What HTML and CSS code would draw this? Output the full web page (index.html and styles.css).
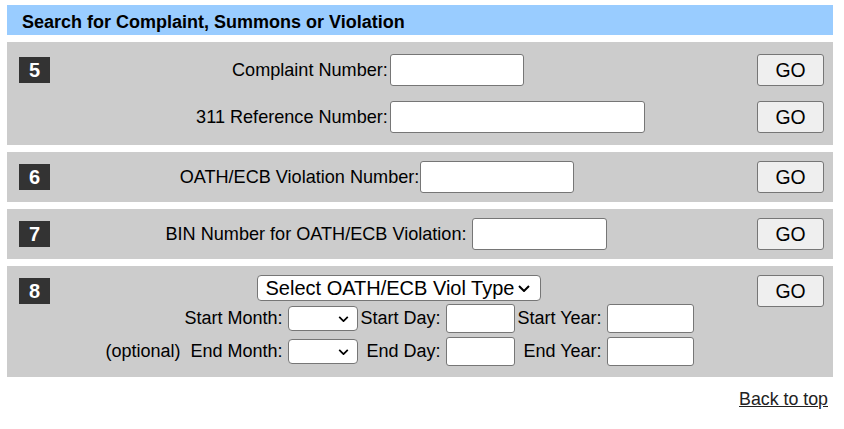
FILE: index.html
```html
<!DOCTYPE html>
<html lang="en">
<head>
<meta charset="utf-8">
<title>Search for Complaint, Summons or Violation</title>
<link rel="stylesheet" href="styles.css">
</head>
<body>
<div class="page">
  <div class="title">Search for Complaint, Summons or Violation</div>

  <section class="panel panel-tall">
    <div class="badge">5</div>
    <div class="middle shift-5">
      <div class="pairs">
        <label class="lbl">Complaint Number:</label><input class="txt w134" type="text">
        <label class="lbl">311 Reference Number:</label><input class="txt w255" type="text">
      </div>
    </div>
    <div class="go-col go-col-5">
      <button class="go">GO</button>
      <button class="go">GO</button>
    </div>
  </section>

  <section class="panel">
    <div class="badge">6</div>
    <div class="middle shift-6">
      <div class="row tight">
        <label class="lbl">OATH/ECB Violation Number:</label><input class="txt w154" type="text">
      </div>
    </div>
    <div class="go-col"><button class="go">GO</button></div>
  </section>

  <section class="panel">
    <div class="badge">7</div>
    <div class="middle shift-7">
      <div class="row spaced">
        <label class="lbl">BIN Number for OATH/ECB Violation:</label><input class="txt w135" type="text">
      </div>
    </div>
    <div class="go-col"><button class="go">GO</button></div>
  </section>

  <section class="panel panel-8">
    <div class="badge">8</div>
    <div class="middle shift-8">
      <div class="stack">
        <select class="type-select">
          <option>Select OATH/ECB Viol Type</option>
        </select>
        <div class="dates">
          <span class="dlbl first">Start Month:</span>
          <select class="mon"><option></option></select>
          <span class="dlbl">Start Day:</span>
          <input class="txt day" type="text">
          <span class="dlbl">Start Year:</span>
          <input class="txt year" type="text">

          <span class="dlbl first">(optional)&nbsp; End Month:</span>
          <select class="mon"><option></option></select>
          <span class="dlbl">End Day:</span>
          <input class="txt day" type="text">
          <span class="dlbl">End Year:</span>
          <input class="txt year" type="text">
        </div>
      </div>
    </div>
    <div class="go-col"><button class="go">GO</button></div>
  </section>

  <div class="back"><a href="#top">Back to top</a></div>
</div>
</body>
</html>
```

FILE: styles.css
```css
html, body {
  margin: 0;
  padding: 0;
  background: #ffffff;
}

body {
  font-family: "Liberation Sans", Arial, sans-serif;
  font-size: 17.8px;
  color: #000000;
}

.page {
  margin: 5px 11px 0 7px;
  display: flex;
  flex-direction: column;
  gap: 7px;
}

.title {
  background: #99ccff;
  font-weight: bold;
  font-size: 18px;
  line-height: 20px;
  padding: 7px 15px 3px 15px;
}

.panel {
  background: #cccccc;
  display: grid;
  grid-template-columns: 31px 1fr 67px;
  align-items: start;
  padding: 9px 9px 9px 12px;
}

.panel-tall {
  padding-top: 12px;
  padding-bottom: 12px;
}

.panel-8 {
  padding-bottom: 11px;
}

.badge {
  background: #333333;
  color: #ffffff;
  font-weight: bold;
  font-size: 20px;
  height: 26px;
  line-height: 26px;
  text-align: center;
  margin-top: 3px;
}

.middle {
  display: flex;
  justify-content: center;
}

.lbl {
  font-size: 18.1px;
}

.shift-5 { padding-left: 34px; }
.shift-6 { padding-right: 53px; }
.shift-7 { padding-right: 35px; }
.shift-8 { padding-right: 8px; }

.pairs {
  display: grid;
  grid-template-columns: auto auto;
  column-gap: 2px;
  row-gap: 15px;
  align-items: center;
}

.pairs .lbl {
  text-align: right;
}

.pairs .txt {
  justify-self: start;
}

.row {
  display: flex;
  align-items: center;
}

.row.tight { gap: 1px; }
.row.spaced { gap: 5px; }

.txt {
  box-sizing: border-box;
  height: 32px;
  border: 1px solid #767676;
  border-radius: 3px;
  background: #ffffff;
  padding: 0 4px;
  margin: 0;
  font-family: inherit;
  font-size: 17px;
}

.w134 { width: 134px; }
.w255 { width: 255px; }
.w154 { width: 154px; }
.w135 { width: 135px; }

.go-col {
  display: flex;
  flex-direction: column;
  gap: 15px;
}

.go {
  box-sizing: border-box;
  width: 67px;
  height: 32px;
  background: #efefef;
  border: 1px solid #767676;
  border-radius: 3px;
  color: #000000;
  font-family: inherit;
  font-size: 19.4px;
  padding: 0;
  margin: 0;
}

.stack {
  display: flex;
  flex-direction: column;
  align-items: center;
  gap: 3px;
}

.type-select,
.mon {
  -webkit-appearance: none;
  appearance: none;
  box-sizing: border-box;
  font-family: inherit;
  color: #000000;
  background-color: #ffffff;
  background-repeat: no-repeat;
  background-image: url("data:image/svg+xml;utf8,<svg xmlns='http://www.w3.org/2000/svg' width='12' height='7' viewBox='0 0 12 7'><path d='M1 1 L6 6 L11 1' fill='none' stroke='black' stroke-width='2'/></svg>");
  border: 1px solid #767676;
  border-radius: 4px;
  margin: 0;
}

.type-select {
  height: 26px;
  font-size: 20px;
  line-height: 24px;
  padding: 0 25px 0 7px;
  background-position: right 10px center;
  background-size: 12px 7px;
}

.dates {
  display: grid;
  grid-template-columns: auto auto auto auto auto auto;
  row-gap: 4px;
  align-items: center;
}

.dlbl {
  text-align: right;
  padding: 0 5px 0 3px;
  white-space: nowrap;
  font-size: 18px;
}

.dlbl.first {
  padding-left: 0;
}

.mon {
  width: 70px;
  height: 25px;
  font-size: 17px;
  padding: 0;
  background-position: right 8px center;
  background-size: 11px 6px;
}

.txt.day {
  width: 69px;
  height: 29px;
}

.txt.year {
  width: 87px;
  height: 29px;
}

.back {
  text-align: right;
  padding-right: 5px;
  margin-top: 5px;
  line-height: 20px;
}

.back a {
  color: #222222;
  text-decoration: underline;
}
```
